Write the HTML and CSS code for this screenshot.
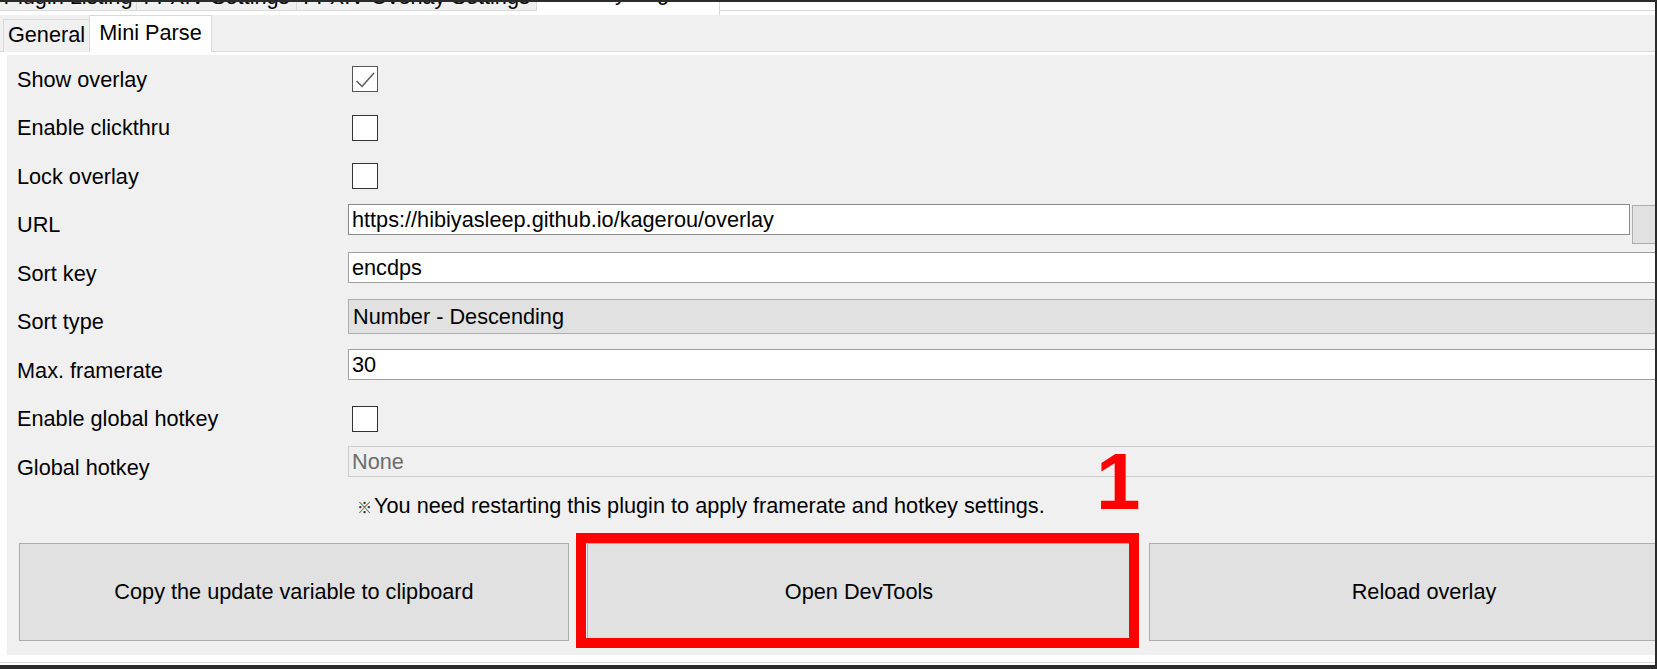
FILE: index.html
```html
<!DOCTYPE html>
<html lang="en">
<head>
    <meta charset="UTF-8">
    <title>OverlayPlugin - Mini Parse</title>
    <link rel="stylesheet" href="styles.css">
</head>
<body>
    <div class="window">
        <div class="act-tabs">
            <div class="act-tab tab-plugins"><span>Plugin Listing</span></div>
            <div class="act-tab tab-ffxiv"><span>FFXIV Settings</span></div>
            <div class="act-tab tab-overlay"><span>FFXIV Overlay Settings</span></div>
            <div class="act-tab tab-plugin selected"><span>OverlayPlugin.dll</span></div>
            <div class="act-tab-fill"></div>
        </div>

        <div class="page">
            <div class="sub-tabs">
                <div class="sub-tab tab-general">General</div>
                <div class="sub-tab tab-miniparse selected">Mini Parse</div>
            </div>

            <div class="page-body">
                <div class="panel">
                    <div class="form">
                        <label class="label">Show overlay</label>
                        <div class="control">
                            <span class="checkbox checked">
                                <svg viewBox="0 0 26 26" width="26" height="26"><polyline points="4.5,15 10,20.5 22,7" fill="none" stroke="#5a5a5a" stroke-width="1.5"/></svg>
                            </span>
                        </div>

                        <label class="label">Enable clickthru</label>
                        <div class="control"><span class="checkbox"></span></div>

                        <label class="label">Lock overlay</label>
                        <div class="control"><span class="checkbox"></span></div>

                        <label class="label">URL</label>
                        <div class="control top">
                            <div class="textbox url">https://hibiyasleep.github.io/kagerou/overlay</div>
                            <div class="browse"></div>
                        </div>

                        <label class="label">Sort key</label>
                        <div class="control top"><div class="textbox wide">encdps</div></div>

                        <label class="label">Sort type</label>
                        <div class="control top"><div class="combo">Number - Descending</div></div>

                        <label class="label">Max. framerate</label>
                        <div class="control top"><div class="textbox wide">30</div></div>

                        <label class="label">Enable global hotkey</label>
                        <div class="control"><span class="checkbox"></span></div>

                        <label class="label">Global hotkey</label>
                        <div class="control top"><div class="textbox wide disabled">None</div></div>
                    </div>

                    <div class="note"><span class="mark">※</span>You need restarting this plugin to apply framerate and hotkey settings.</div>

                    <div class="actions">
                        <button class="button btn-copy">Copy the update variable to clipboard</button>
                        <button class="button btn-devtools">Open DevTools</button>
                        <button class="button btn-reload">Reload overlay</button>
                    </div>
                </div>
            </div>
        </div>

        <div class="highlight"></div>
        <div class="step">1</div>
    </div>
</body>
</html>
```

FILE: styles.css
```css
body {
    margin: 0;
    background-color: #2b2b2b;
    font-family: 'Liberation Sans', Arial, 'Noto Sans CJK JP', sans-serif;
    font-size: 21.7px;
    color: #000;
    overflow: hidden;
}
.window {
    position: relative;
    width: 1655px;
    height: 663px;
    margin-top: 2px;
    background: #fff;
    overflow: hidden;
}

/* ACT top tabs, mostly scrolled out of view */
.act-tabs {
    display: flex;
    height: 9px;
}
.act-tab {
    height: 8px;
    overflow: hidden;
    background: #f0f0f0;
    border-right: 1px solid #d9d9d9;
    border-bottom: 1px solid #d9d9d9;
    text-align: center;
    white-space: nowrap;
}
.act-tab span {
    display: block;
    line-height: 25px;
    margin-top: -18px;
}
.tab-plugins { width: 136px; }
.tab-ffxiv { width: 159px; }
.tab-overlay { width: 239px; }
.act-tab.selected {
    width: 182px;
    background: #fff;
    border-bottom: none;
    height: 13px;
    text-align: left;
}
.act-tab.selected span {
    margin-top: -22px;
    padding-left: 14px;
}
.act-tab-fill {
    flex: 1;
    height: 8px;
    border-bottom: 1px solid #d9d9d9;
}

/* inner tab control */
.page {
    padding-top: 4px;
}
.sub-tabs {
    display: flex;
    align-items: flex-end;
    height: 36px;
    padding-left: 3px;
    background: #f0f0f0;
    border-bottom: 1px solid #d9d9d9;
}
.sub-tab {
    box-sizing: border-box;
    margin-bottom: -1px;
    border: 1px solid #d9d9d9;
    border-bottom: none;
    text-align: center;
    white-space: nowrap;
}
.tab-general {
    width: 86px;
    height: 33px;
    line-height: 30px;
    background: #f0f0f0;
    border-right: none;
}
.tab-miniparse {
    width: 123px;
    height: 37px;
    line-height: 34px;
    background: #fff;
}
.page-body {
    padding: 3px 0 7px 7px;
    border-bottom: 1px solid #d9d9d9;
}
.panel {
    background: #f0f0f0;
    padding-bottom: 14px;
}

/* settings grid */
.form {
    display: grid;
    grid-template-columns: 331px 1fr;
    grid-auto-rows: 48.5px;
    padding-left: 10px;
}
.label {
    display: flex;
    align-items: center;
    padding-top: 1px;
    white-space: nowrap;
}
.control {
    display: flex;
    align-items: center;
}
.control.top {
    align-items: flex-start;
}
.checkbox {
    box-sizing: border-box;
    display: block;
    width: 26px;
    height: 26px;
    margin-left: 4px;
    background: #fff;
    border: 1.5px solid #333;
}
.checkbox.checked {
    border-color: #555;
}
.checkbox svg {
    display: block;
    margin: -1.5px;
}
.textbox {
    box-sizing: border-box;
    height: 31px;
    margin-top: 3px;
    padding-left: 3px;
    line-height: 29px;
    background: #fff;
    border: 1px solid #a0a0a0;
    white-space: nowrap;
}
.textbox.url {
    width: 1282px;
    border-color: #8a8a8a;
}
.textbox.wide {
    width: 1340px;
}
.textbox.disabled {
    background: #f0f0f0;
    border-color: #cccccc;
    color: #6d6d6d;
}
.browse {
    box-sizing: border-box;
    width: 40px;
    height: 39px;
    margin: 4px 0 0 2px;
    background: #e1e1e1;
    border: 1px solid #adadad;
}
.combo {
    box-sizing: border-box;
    width: 1340px;
    height: 35px;
    margin-top: 1.5px;
    padding-left: 4px;
    line-height: 33px;
    background: #e1e1e1;
    border: 1px solid #adadad;
}
.note {
    height: 28px;
    line-height: 28px;
    padding-left: 350px;
    white-space: nowrap;
}
.note .mark {
    font-size: 15px;
    margin-right: 2px;
    color: #333;
}

/* bottom buttons */
.actions {
    display: flex;
    gap: 18px;
    margin-top: 23.5px;
    padding-left: 12px;
}
.button {
    flex: none;
    height: 98px;
    font: inherit;
    color: #000;
    background: #e1e1e1;
    border: 1px solid #adadad;
    padding: 0;
}
.btn-copy { width: 550px; }
.btn-devtools { width: 544px; }
.btn-reload { width: 550px; }

/* red annotation */
.highlight {
    position: absolute;
    left: 576px;
    top: 531px;
    width: 563px;
    height: 115px;
    box-sizing: border-box;
    border: 10px solid #ff0000;
}
.step {
    position: absolute;
    left: 1096px;
    top: 440px;
    font-size: 80px;
    line-height: 80px;
    font-weight: bold;
    color: #ff0000;
}
```
